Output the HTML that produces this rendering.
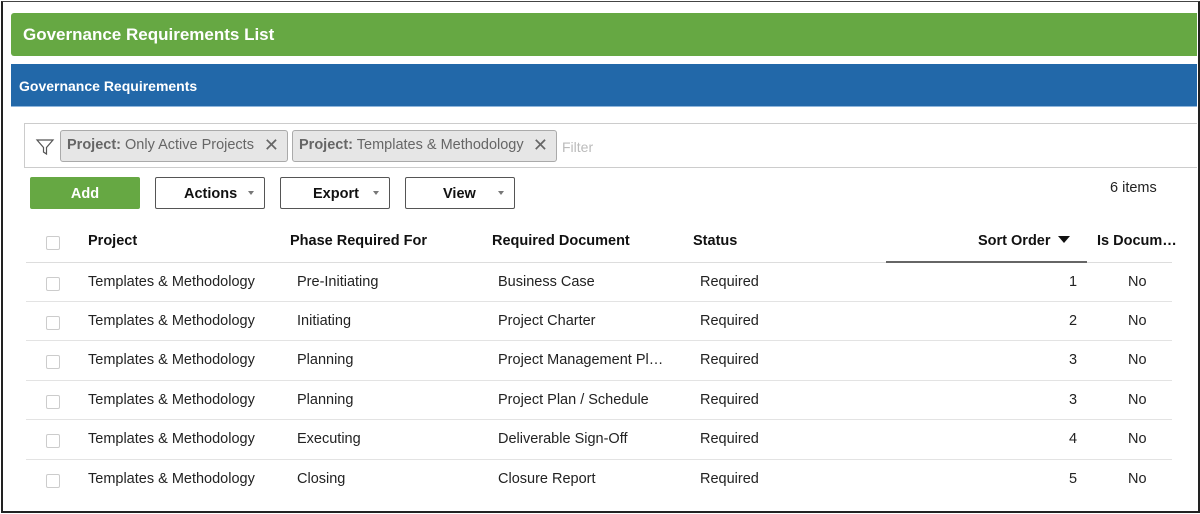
<!DOCTYPE html><html><head><style>
body{margin:0;width:1200px;height:514px;background:#fff;font-family:"Liberation Sans",Arial,sans-serif;position:relative;overflow:hidden}
.a{position:absolute}
.frame{left:1px;top:1px;width:1195px;height:509px;border:2px solid #222;border-top:1px solid #444}
.green{left:11px;top:13px;width:1186px;height:43px;background:#66a843;border-radius:3px 0 0 3px;color:#fff;font-weight:bold;font-size:17px;line-height:43px;padding-left:12px;box-sizing:border-box}
.blue{left:11px;top:64px;width:1186px;height:43px;background:#2268a9;color:#fff;font-weight:bold;font-size:14px;line-height:45px;padding-left:8px;box-sizing:border-box;border-bottom:1px solid #8fb6dc}
.filt{left:24px;top:123px;width:1173px;height:45px;border:1px solid #ccc;border-right:none;box-sizing:border-box}
.chip{top:130px;height:32px;background:#e6e6e6;border:1px solid #aaa;border-radius:3px;box-sizing:border-box;font-size:14.5px;color:#666;line-height:28px;padding-left:6px}
.chip b{color:#666}
.x{position:absolute;right:8px;top:0;font-size:18px;color:#666;font-weight:300}
.btn{top:177px;height:32px;border:1px solid #555;border-radius:2px;box-sizing:border-box;font-weight:bold;font-size:14.5px;line-height:32px;color:#111}
.car{position:absolute;right:10px;top:13px;border-left:3px solid transparent;border-right:3px solid transparent;border-top:4px solid #777}
.h{top:233px;font-weight:bold;font-size:14.5px;color:#111}
.t{font-size:14.5px;color:#222}
.cb{width:12px;height:12px;border:1px solid #ccc;border-radius:2px}
.line{left:26px;width:1146px;height:1px;background:#e3e3e3}
</style></head><body>
<div class="a frame"></div>
<div class="a green">Governance Requirements List</div>
<div class="a blue">Governance Requirements</div>
<div class="a filt"></div>
<svg class="a" style="left:35px;top:137px" width="20" height="20" viewBox="0 0 20 20"><path d="M2 3H18L11.5 10.5V17L8.5 15V10.5Z" fill="none" stroke="#555" stroke-width="1.2"/></svg>
<div class="a chip" style="left:60px;width:228px"><b>Project:</b> Only Active Projects <span class="x">✕</span></div>
<div class="a chip" style="left:292px;width:265px"><b>Project:</b> Templates &amp; Methodology <span class="x">✕</span></div>
<div class="a t" style="left:562px;top:139px;color:#bbb;font-size:14px">Filter</div>
<div class="a btn" style="left:30px;width:110px;background:#66a843;border-color:#66a843;color:#fff;text-align:center">Add</div>
<div class="a btn" style="left:155px;width:110px;padding-left:28px">Actions<span class="car"></span></div>
<div class="a btn" style="left:280px;width:110px;padding-left:32px">Export<span class="car"></span></div>
<div class="a btn" style="left:405px;width:110px;padding-left:37px">View<span class="car"></span></div>
<div class="a t" style="left:1110px;top:180px">6 items</div>
<div class="a cb" style="left:46px;top:236px"></div>
<div class="a h" style="left:88px">Project</div>
<div class="a h" style="left:290px">Phase Required For</div>
<div class="a h" style="left:492px">Required Document</div>
<div class="a h" style="left:693px">Status</div>
<div class="a h" style="left:978px">Sort Order <span style="display:inline-block;border-left:6px solid transparent;border-right:6px solid transparent;border-top:7px solid #111;margin-left:3px;vertical-align:2px"></span></div>
<div class="a h" style="left:1097px">Is Docum…</div>
<div class="a line" style="top:262px;background:#ddd"></div>
<div class="a" style="left:886px;top:261px;width:201px;height:2px;background:#666"></div>
<div id="rows"></div>
<script>
var d=[["Pre-Initiating","Business Case",1],["Initiating","Project Charter",2],["Planning","Project Management Pl…",3],["Planning","Project Plan / Schedule",3],["Executing","Deliverable Sign-Off",4],["Closing","Closure Report",5]];
var h="";d.forEach(function(r,i){var y=273.5+i*39.4;
h+='<div class="a cb" style="left:46px;top:'+(y+3)+'px"></div><div class="a t" style="left:88px;top:'+y+'px">Templates &amp; Methodology</div><div class="a t" style="left:297px;top:'+y+'px">'+r[0]+'</div><div class="a t" style="left:498px;top:'+y+'px">'+r[1]+'</div><div class="a t" style="left:700px;top:'+y+'px">Required</div><div class="a t" style="left:1069px;top:'+y+'px">'+r[2]+'</div><div class="a t" style="left:1128px;top:'+y+'px">No</div>';
if(i<5)h+='<div class="a line" style="top:'+(y+27.5)+'px"></div>';});
document.getElementById("rows").innerHTML=h;
</script>
</body></html>
